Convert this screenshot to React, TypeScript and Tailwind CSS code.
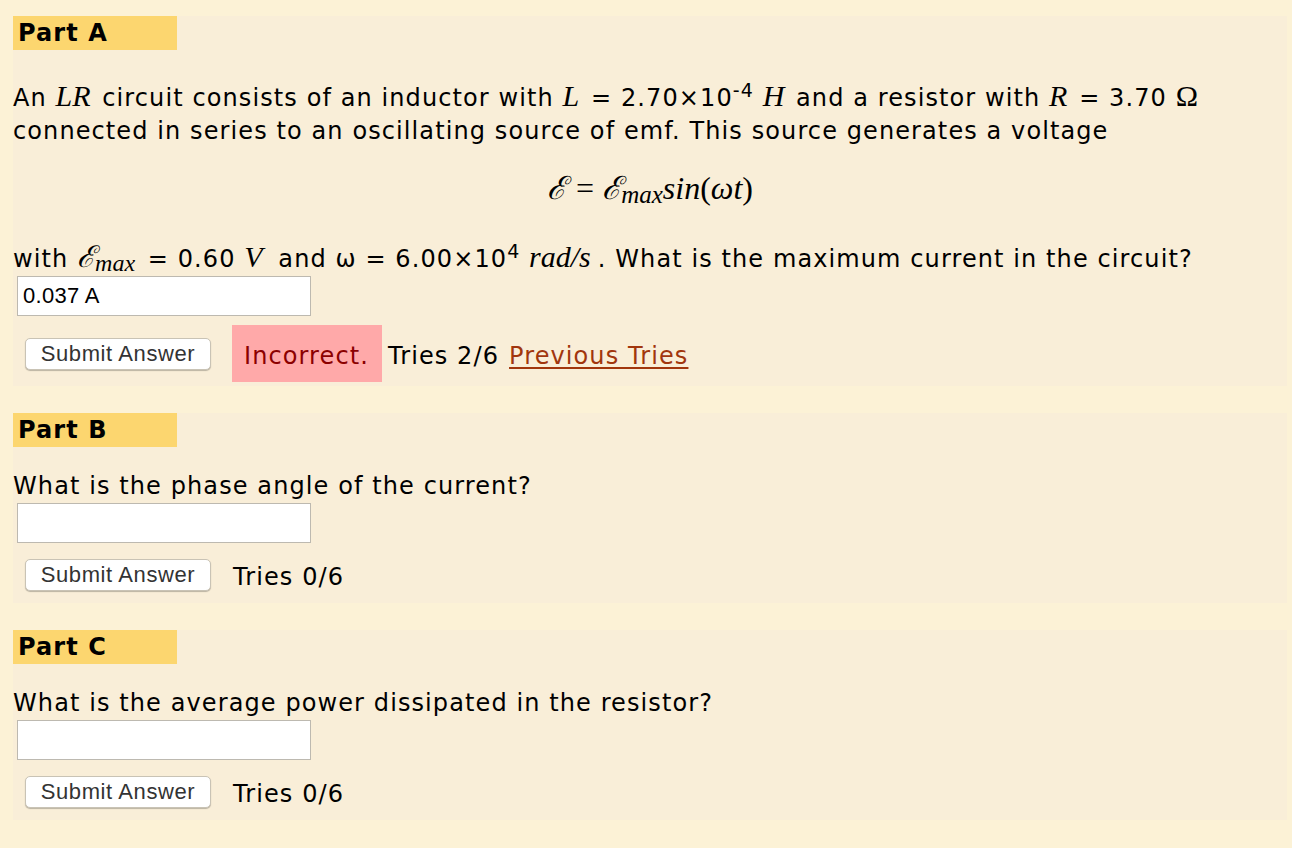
import type { ReactNode } from 'react'

const sans = 'font-["DejaVu_Sans",Verdana,sans-serif]'
const serif = 'font-["Liberation_Serif","DejaVu_Serif",serif]'

function M({ children, pad = 'pr-[3px]' }: { children: ReactNode; pad?: string }) {
  return <span className={`${serif} italic text-[30px] leading-none tracking-normal ${pad}`}>{children}</span>
}

function Emf() {
  return (
    <span className={`${serif} italic text-[30px] leading-none tracking-normal pr-[4px]`}>
      ℰ<sub className="text-[24px] relative top-[4px] align-baseline">max</sub>
    </span>
  )
}

function SubmitRow({ tries, incorrect }: { tries: string; incorrect?: boolean }) {
  return (
    <div className="flex items-center h-[57px]">
      <button className="ml-[12px] h-[32px] w-[186px] rounded-[5px] bg-white border border-[#c9c3b5] shadow-[0_1px_1px_rgba(0,0,0,0.25)] text-[22px] leading-none tracking-[0.6px] text-[#333] font-['Liberation_Sans',Arial,sans-serif]">
        Submit Answer
      </button>
      {incorrect ? (
        <>
          <span className="ml-[21px] h-[57px] pl-[12px] pr-[13px] pt-[5px] flex items-center bg-[#ffa9a9] text-[#8b0000]">Incorrect.</span>
          <span className="ml-[6px] mt-[5px]">{tries}</span>
          <a href="#" className="ml-[10px] mt-[5px] text-[#a1360d] underline underline-offset-[3px]">Previous Tries</a>
        </>
      ) : (
        <span className="ml-[22px] mt-[5px]">{tries}</span>
      )}
    </div>
  )
}

function Answer({ value = '' }: { value?: string }) {
  return (
    <input
      readOnly
      value={value}
      className="ml-[4px] block w-[294px] h-[40px] bg-white border border-[#bdb9b0] px-[5px] text-[22px] tracking-[0.3px] text-black font-['Liberation_Sans',Arial,sans-serif] outline-none"
    />
  )
}

function Header({ label }: { label: string }) {
  return (
    <div className="w-[164px] h-[34px] bg-[#fcd66f] pl-[5px] font-bold text-[24px] leading-[34px]">{label}</div>
  )
}

export default function App() {
  return (
    <div className={`min-h-[848px] bg-[#fcf2d6] pt-[16px] pl-[13px] pr-[5px] text-black ${sans} text-[24px] leading-[33px] tracking-[1.1px]`}>
      {/* Part A */}
      <section className="bg-[#f9eed8] pb-[4px]">
        <Header label="Part A" />
        <p className="mt-[31px]">
          An <M>LR</M> circuit consists of an inductor with <M>L</M> = 2.70×10
          <sup className="text-[19px]">-4</sup> <M>H</M> and a resistor with <M>R</M> = 3.70{' '}
          <span className={`${serif} text-[30px] leading-none`}>Ω</span>
          <br />
          connected in series to an oscillating source of emf. This source generates a voltage
        </p>
        <p className={`${serif} italic text-[32px] tracking-normal text-center mt-[24px] leading-[33px]`}>
          ℰ<span className="not-italic ml-[10px] mr-[8px]">=</span>ℰ<sub className="text-[25px] relative top-[4px] align-baseline">max</sub>sin<span className="not-italic">(</span>ωt<span className="not-italic">)</span>
        </p>
        <p className="mt-[37px]">
          with <Emf /> = 0.60 <M pad="pr-[7px]">V</M> and ω = 6.00×10<sup className="text-[19px]">4</sup> <M pad="pr-[7px]">rad/s</M>. What is the maximum current in the circuit?
        </p>
        <Answer value="0.037 A" />
        <div className="mt-[9px]">
          <SubmitRow tries="Tries 2/6" incorrect />
        </div>
      </section>

      {/* Part B */}
      <section className="bg-[#f9eed8] mt-[27px]">
        <Header label="Part B" />
        <p className="mt-[23px]">What is the phase angle of the current?</p>
        <Answer />
        <div className="mt-[3px]">
          <SubmitRow tries="Tries 0/6" />
        </div>
      </section>

      {/* Part C */}
      <section className="bg-[#f9eed8] mt-[27px]">
        <Header label="Part C" />
        <p className="mt-[23px]">What is the average power dissipated in the resistor?</p>
        <Answer />
        <div className="mt-[3px]">
          <SubmitRow tries="Tries 0/6" />
        </div>
      </section>
    </div>
  )
}
